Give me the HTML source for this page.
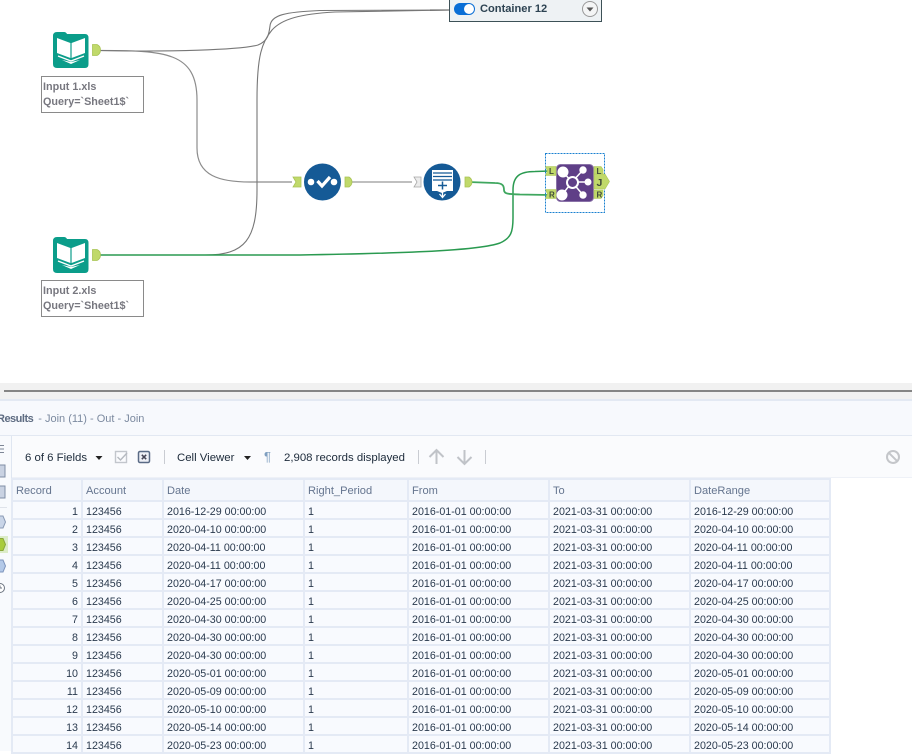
<!DOCTYPE html>
<html>
<head>
<meta charset="utf-8">
<style>
html,body{margin:0;padding:0;background:#fff}
body{width:912px;height:751px;position:relative;overflow:hidden;font-family:"Liberation Sans",sans-serif;font-size:11px;color:#26384c}
.abs{position:absolute}
.lbl{position:absolute;left:41px;width:100px;height:35px;border:1px solid #8a8a8a;background:#fff;color:#77777f;font-size:10.8px;font-weight:bold;line-height:15px;padding-left:1px;box-sizing:content-box}
.lbl div{white-space:nowrap;position:relative;top:3px}
table{position:absolute;left:11px;top:478px;border-collapse:separate;border-spacing:2px;table-layout:fixed;width:820px;background:#e4eaf5;font-size:10.7px}
td,th{background:#f8fafe;padding:4px 0 0 3px;height:16px;line-height:12px;font-weight:normal;text-align:left;white-space:nowrap;overflow:hidden;color:#2a3a4e;box-sizing:border-box}
th{height:20px;padding-top:2px;line-height:18px;font-size:11.1px;color:#65758f;background:#f4f7fc}
td.n{text-align:right;padding:4px 3px 0 0}
.tb{position:absolute;top:451px;font-size:11.4px;line-height:14px;color:#1c2a3a;white-space:nowrap}
</style>
</head>
<body>
<svg class="abs" style="left:0;top:0" width="912" height="400" viewBox="0 0 912 400">
<g fill="none">
<path d="M100 50.500 C165 50.500 197 52 197 100 L197 148 C197 176 220 182 250 182 L292 182" stroke="#8c8c8c" stroke-width="1.200"/>
<path d="M100 50.500 C170 52 240 50 258 45 C268 41 269 34 270 26 C271 15 285 12 320 10.500 L450 10" stroke="#777" stroke-width="1.100"/>
<path d="M100 255 L205 255 C245 255 257 240 257 190 L257 100 C257 55 262 42 272 30 C282 19 300 14 335 12 L450 10" stroke="#777" stroke-width="1.100"/>
<path d="M351 182 L412 182" stroke="#aaa" stroke-width="1.600"/>
<path d="M100 255 L300 255 C420 253 480 250 500 243 C511 238 513 232 513 218 L513 190 C513 176 520 171.500 535 171.500 L550 171" stroke="#2a9a50" stroke-width="1.500"/>
<path d="M468 182 L495 183 C503 183 504 186 504 190 C504 194 508 194 520 194.500 L550 195" stroke="#3fa75f" stroke-width="1.800"/>
<path d="M450 10 L430 10" stroke="#555" stroke-width="1"/>
</g>

<!-- Input 1 icon -->
<g>
<path d="M53 36 Q53 32 57 32 L64 32 Q66 32 67 34 L85 34 Q88.500 34 88.500 38 L88.500 64 Q88.500 68 85 68 L57 68 Q53 68 53 64 Z" fill="#0b9d8a"/>
<path d="M57 38 L70.400 43 L70.400 58 L57 53 Z M71.600 43 L85 38 L85 53 L71.600 58 Z" fill="#fff"/>
<path d="M58 56 L71 61 L84 56" fill="none" stroke="#fff" stroke-width="1.300"/>
<path d="M62 60 L71 64 L80 60 L71 62 Z" fill="#fff"/>
</g>
<path d="M92.500 44.500 L97 44.500 Q100.500 46 100.500 50 Q100.500 54 97 55.500 L92.500 55.500 Z" fill="#c0d96a" stroke="#a9c455" stroke-width=".8"/>

<!-- Input 2 icon -->
<g>
<path d="M53 241 Q53 237 57 237 L64 237 Q66 237 67 239 L85 239 Q88.500 239 88.500 243 L88.500 269 Q88.500 273 85 273 L57 273 Q53 273 53 269 Z" fill="#0b9d8a"/>
<path d="M57 243 L70.400 248 L70.400 263 L57 258 Z M71.600 248 L85 243 L85 258 L71.600 263 Z" fill="#fff"/>
<path d="M58 261 L71 266 L84 261" fill="none" stroke="#fff" stroke-width="1.300"/>
<path d="M62 265 L71 269 L80 265 L71 267 Z" fill="#fff"/>
</g>
<path d="M92.500 249.500 L97 249.500 Q100.500 251 100.500 255 Q100.500 259 97 260.500 L92.500 260.500 Z" fill="#c0d96a" stroke="#a9c455" stroke-width=".8"/>

<!-- Select tool -->
<path d="M293 177 L301 177 L301 187 L293 187 L296 182 Z" fill="#c0d96a" stroke="#a9c455" stroke-width=".8"/>
<circle cx="322.500" cy="182" r="18.500" fill="#155a96"/>
<circle cx="311" cy="182" r="3.300" fill="#fff"/>
<circle cx="334" cy="182" r="3.300" fill="#fff"/>
<path d="M317.500 181 L322 186 L330 177" fill="none" stroke="#fff" stroke-width="3.200"/>
<path d="M345 177 L349 177 Q352 179 352 182 Q352 185 349 187 L345 187 Z" fill="#c0d96a" stroke="#a9c455" stroke-width=".8"/>

<!-- Summarize tool -->
<path d="M414 177 L421 177 L421 187 L414 187 L417 182 Z" fill="#ececec" stroke="#a8a8a8" stroke-width=".8"/>
<circle cx="442" cy="182" r="18.500" fill="#155a96"/>
<path d="M432 170 L453 170 L453 191 L447 191 L442 193 L437 191 L432 191 Z" fill="#fff"/>
<path d="M433 173 L452 173 M433 176.500 L452 176.500 M433 180 L452 180" stroke="#155a96" stroke-width="1.300"/>
<path d="M438 185.500 L447 185.500 M442.500 181.500 L442.500 189.500" stroke="#155a96" stroke-width="1.500"/>
<path d="M442.500 190 L442.500 197 M439.500 194 L442.500 197.500 L445.500 194" stroke="#fff" stroke-width="1.300" fill="none"/>
<path d="M465 177 L469 177 Q472 179 472 182 Q472 185 469 187 L465 187 Z" fill="#c0d96a" stroke="#a9c455" stroke-width=".8"/>

<!-- Join tool -->
<rect x="545.500" y="153.500" width="59" height="59" fill="none" stroke="#1a80d0" stroke-width="1" stroke-dasharray="2 1"/>
<rect x="556.500" y="164.500" width="37" height="37" rx="4" fill="#5f3f87" stroke="#8a72a8" stroke-width="1"/>
<g stroke="#fff" stroke-width="1.500" fill="none">
<path d="M563 172 L572 182 M583 170 L572 182 M562 195 L572 182 M583 195 L572 182 M588 182 L572 182"/>
</g>
<circle cx="572.500" cy="182.500" r="5.500" fill="#5f3f87" stroke="#fff" stroke-width="2"/>
<g fill="#fff">
<circle cx="563" cy="172" r="5.500"/>
<circle cx="583" cy="170" r="3.700"/>
<circle cx="562" cy="195" r="5.500"/>
<circle cx="588" cy="182" r="3.500"/>
<circle cx="583" cy="195" r="3.700"/>
</g>
<path d="M545.500 166.500 L556 166.500 L556 175.500 L545.500 175.500 L547.500 171 Z" fill="#c0d96a" stroke="#a9c455" stroke-width=".6"/>
<path d="M545.500 189.500 L556 189.500 L556 198.500 L545.500 198.500 L547.500 194 Z" fill="#c0d96a" stroke="#a9c455" stroke-width=".6"/>
<path d="M594 166.500 L601 166.500 L603 169.500 L603 175 L594 175 Z" fill="#c0d96a" stroke="#a9c455" stroke-width=".6"/>
<path d="M594 190 L603 190 L603 195.500 L601 198.500 L594 198.500 Z" fill="#c0d96a" stroke="#a9c455" stroke-width=".6"/>
<path d="M594 174 L605 174 L609.500 181.500 L605 189 L594 189 Z" fill="#c0d96a" stroke="#a9c455" stroke-width=".6"/>
<g font-family="Liberation Sans, sans-serif" font-weight="bold" fill="#3f4a3a">
<text x="549" y="174" font-size="8">L</text>
<text x="549" y="197.500" font-size="8">R</text>
<text x="596.500" y="174" font-size="8">L</text>
<text x="596.500" y="197.500" font-size="8">R</text>
<text x="596.500" y="186" font-size="10.500">J</text>
</g>
</svg>

<div class="lbl" style="top:76px"><div>Input 1.xls</div><div>Query=`Sheet1$`</div></div>
<div class="lbl" style="top:280px"><div>Input 2.xls</div><div>Query=`Sheet1$`</div></div>

<!-- Container header -->
<div class="abs" style="left:449px;top:-2px;width:151px;height:22px;background:#eef2f4;border:1px solid #3d5157"></div>
<div class="abs" style="left:454px;top:3px;width:21px;height:12px;border-radius:6px;background:#0b6fd6"></div>
<div class="abs" style="left:464px;top:4px;width:10px;height:10px;border-radius:5px;background:#fff"></div>
<div class="abs" style="left:480px;top:2px;font-size:11.100px;font-weight:bold;line-height:14px;color:#2d4352;white-space:nowrap">Container 12</div>
<svg class="abs" style="left:580px;top:0" width="20" height="20"><circle cx="10" cy="9" r="7.500" fill="#f4f5f5" stroke="#999" stroke-width="1"/><path d="M6.500 7.500 L13.500 7.500 L10 11.500 Z" fill="#555"/></svg>

<!-- Splitter -->
<div class="abs" style="left:0;top:383px;width:912px;height:17px;background:#f1f1f1"></div>
<div class="abs" style="left:4px;top:390px;width:908px;height:2px;background:#858585"></div>
<div class="abs" style="left:0;top:399px;width:912px;height:2px;background:#e3e9f3"></div>

<!-- Results header -->
<div class="abs" style="left:0;top:401px;width:912px;height:34px;background:#f7f9fd"></div>
<div class="abs" style="left:-3px;top:412px;font-size:11px;line-height:14px;color:#7c8aa0;white-space:nowrap"><b style="color:#5e6c82;letter-spacing:-.5px">Results</b><span style="margin-left:5px">- Join (11) - Out - Join</span></div>
<div class="abs" style="left:0;top:435px;width:912px;height:1px;background:#e2e8f2"></div>

<!-- Toolbar -->
<div class="abs" style="left:12px;top:436px;width:900px;height:41px;background:#fafbfd"></div>
<div class="abs" style="left:12px;top:477px;width:900px;height:1px;background:#eef1f7"></div>
<div class="tb" style="left:25px">6 of 6 Fields</div>
<svg class="abs" style="left:95px;top:454px" width="10" height="8"><path d="M0.500 2 L7.500 2 L4 6 Z" fill="#222"/></svg>
<svg class="abs" style="left:114px;top:450px" width="16" height="15"><rect x="1.500" y="1.500" width="11" height="11" fill="none" stroke="#c2c6cc" stroke-width="1.400"/><path d="M3.500 7 L6.500 10 L13 3" fill="none" stroke="#b5b9c0" stroke-width="1.400"/></svg>
<svg class="abs" style="left:137px;top:450px" width="14" height="14"><rect x="1.500" y="1.500" width="11" height="11" rx="1.500" fill="#eef0f6" stroke="#596a85" stroke-width="1.500"/><path d="M4.800 4.800 L9.200 9.200 M9.200 4.800 L4.800 9.200" stroke="#445" stroke-width="1.500"/></svg>
<div class="abs" style="left:164px;top:450px;width:1px;height:14px;background:#c9ccd2"></div>
<div class="tb" style="left:177px">Cell Viewer</div>
<svg class="abs" style="left:243px;top:454px" width="10" height="8"><path d="M1 2 L8 2 L4.500 6 Z" fill="#222"/></svg>
<div class="abs" style="left:264px;top:449px;font-size:13px;line-height:15px;color:#7f9fc0">¶</div>
<div class="tb" style="left:284px">2,908 records displayed</div>
<div class="abs" style="left:418px;top:450px;width:1px;height:14px;background:#c9ccd2"></div>
<svg class="abs" style="left:427px;top:448px" width="50" height="18"><path d="M9.500 16 L9.500 2.500 M2.500 9 L9.500 2 L16.500 9 M37.500 2 L37.500 15.500 M30.500 9 L37.500 16 L44.500 9" fill="none" stroke="#c0c3c8" stroke-width="2"/></svg>
<div class="abs" style="left:485px;top:450px;width:1px;height:14px;background:#c9ccd2"></div>
<svg class="abs" style="left:885px;top:449px" width="16" height="16"><circle cx="8" cy="8" r="6" fill="none" stroke="#c4c6ca" stroke-width="2"/><path d="M3.800 3.800 L12.200 12.200" stroke="#c4c6ca" stroke-width="2"/></svg>

<!-- Left sidebar -->
<div class="abs" style="left:0;top:436px;width:11px;height:315px;background:#f8fafd"></div>
<div class="abs" style="left:11px;top:436px;width:1px;height:315px;background:#dfe6f1"></div>
<svg class="abs" style="left:0;top:436px" width="11" height="170">
<path d="M0 9.500 L4 9.500 M0 13 L4 13 M0 16.500 L4 16.500" stroke="#7d8696" stroke-width="1"/>
<rect x="-3" y="29" width="8" height="12" fill="#c9d2e2" stroke="#7f8da5"/>
<rect x="-3" y="50" width="8" height="12" fill="#c9d2e2" stroke="#7f8da5"/>
<path d="M0 71.500 L7 71.500" stroke="#dfe3ea"/>
<path d="M-2 80 L3 80 L5.500 86 L3 92 L-2 92 Z" fill="#c9d5e8" stroke="#8a9ab5"/>
<rect x="0" y="100" width="8" height="17" fill="#dcecc8"/>
<path d="M-2 102.500 L3 102.500 L5.500 108.500 L3 114.500 L-2 114.500 Z" fill="#a8cc3c" stroke="#8aa83a"/>
<path d="M-2 124 L3 124 L5.500 130 L3 136 L-2 136 Z" fill="#b3c9e8" stroke="#7d94bc"/>
<circle cx="0" cy="152" r="4.500" fill="#fff" stroke="#6c7480" stroke-width="1"/>
<path d="M0 149.500 L0 152 L2 152" stroke="#6c7480" fill="none"/>
</svg>

<!-- Grid -->
<table>
<colgroup><col style="width:68px"><col style="width:79px"><col style="width:139px"><col style="width:102px"><col style="width:139px"><col style="width:139px"><col style="width:138px"></colgroup>
<tr><th>Record</th><th>Account</th><th>Date</th><th>Right_Period</th><th>From</th><th>To</th><th>DateRange</th></tr>
<tr><td class="n">1</td><td>123456</td><td>2016-12-29 00:00:00</td><td>1</td><td>2016-01-01 00:00:00</td><td>2021-03-31 00:00:00</td><td>2016-12-29 00:00:00</td></tr>
<tr><td class="n">2</td><td>123456</td><td>2020-04-10 00:00:00</td><td>1</td><td>2016-01-01 00:00:00</td><td>2021-03-31 00:00:00</td><td>2020-04-10 00:00:00</td></tr>
<tr><td class="n">3</td><td>123456</td><td>2020-04-11 00:00:00</td><td>1</td><td>2016-01-01 00:00:00</td><td>2021-03-31 00:00:00</td><td>2020-04-11 00:00:00</td></tr>
<tr><td class="n">4</td><td>123456</td><td>2020-04-11 00:00:00</td><td>1</td><td>2016-01-01 00:00:00</td><td>2021-03-31 00:00:00</td><td>2020-04-11 00:00:00</td></tr>
<tr><td class="n">5</td><td>123456</td><td>2020-04-17 00:00:00</td><td>1</td><td>2016-01-01 00:00:00</td><td>2021-03-31 00:00:00</td><td>2020-04-17 00:00:00</td></tr>
<tr><td class="n">6</td><td>123456</td><td>2020-04-25 00:00:00</td><td>1</td><td>2016-01-01 00:00:00</td><td>2021-03-31 00:00:00</td><td>2020-04-25 00:00:00</td></tr>
<tr><td class="n">7</td><td>123456</td><td>2020-04-30 00:00:00</td><td>1</td><td>2016-01-01 00:00:00</td><td>2021-03-31 00:00:00</td><td>2020-04-30 00:00:00</td></tr>
<tr><td class="n">8</td><td>123456</td><td>2020-04-30 00:00:00</td><td>1</td><td>2016-01-01 00:00:00</td><td>2021-03-31 00:00:00</td><td>2020-04-30 00:00:00</td></tr>
<tr><td class="n">9</td><td>123456</td><td>2020-04-30 00:00:00</td><td>1</td><td>2016-01-01 00:00:00</td><td>2021-03-31 00:00:00</td><td>2020-04-30 00:00:00</td></tr>
<tr><td class="n">10</td><td>123456</td><td>2020-05-01 00:00:00</td><td>1</td><td>2016-01-01 00:00:00</td><td>2021-03-31 00:00:00</td><td>2020-05-01 00:00:00</td></tr>
<tr><td class="n">11</td><td>123456</td><td>2020-05-09 00:00:00</td><td>1</td><td>2016-01-01 00:00:00</td><td>2021-03-31 00:00:00</td><td>2020-05-09 00:00:00</td></tr>
<tr><td class="n">12</td><td>123456</td><td>2020-05-10 00:00:00</td><td>1</td><td>2016-01-01 00:00:00</td><td>2021-03-31 00:00:00</td><td>2020-05-10 00:00:00</td></tr>
<tr><td class="n">13</td><td>123456</td><td>2020-05-14 00:00:00</td><td>1</td><td>2016-01-01 00:00:00</td><td>2021-03-31 00:00:00</td><td>2020-05-14 00:00:00</td></tr>
<tr><td class="n">14</td><td>123456</td><td>2020-05-23 00:00:00</td><td>1</td><td>2016-01-01 00:00:00</td><td>2021-03-31 00:00:00</td><td>2020-05-23 00:00:00</td></tr>
</table>
</body>
</html>
